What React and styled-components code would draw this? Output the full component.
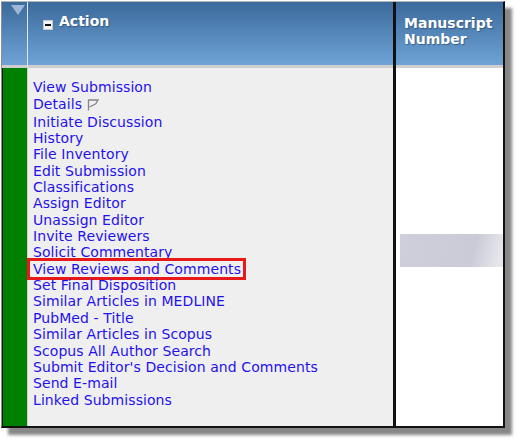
import React from 'react';
import styled, { createGlobalStyle } from 'styled-components';

const Global = createGlobalStyle`
  html, body { margin: 0; padding: 0; background: #fff; }
  body { width: 521px; height: 444px; overflow: hidden; font-family: "DejaVu Sans", Verdana, sans-serif; }
`;

const Frame = styled.div`
  box-sizing: border-box;
  width: 504px;
  height: 427px;
  margin: 1px 0 0 1px;
  border: 1px solid #8f8f8f;
  border-top-color: #b5b5b5;
  border-right: 2px solid #111;
  border-bottom: 2px solid #111;
  background: #fff;
  box-shadow: 7px 7px 3px rgba(70, 70, 70, 0.65);
  display: grid;
  grid-template-columns: 26px 365px 3px 1fr;
  grid-template-rows: 66px 1fr;
`;

const HeadCell = styled.div`
  box-sizing: border-box;
  background: linear-gradient(#3b6a9c, #6fa3d6);
  border-bottom: 3px solid #cfcfcf;
  border-right: ${p => (p.$divider ? '1px solid #dfe8f0' : 'none')};
  color: #fff;
  font-weight: bold;
  font-size: 14px;
  line-height: 16px;
  text-shadow: 1px 1px 1px rgba(20, 50, 90, 0.5);
  padding: ${p => p.$pad || '0'};
  display: flex;
  align-items: flex-start;
  gap: 6px;
`;

const SortArrow = styled.span`
  width: 0;
  height: 0;
  margin: 3px 0 0 9px;
  border-left: 7px solid transparent;
  border-right: 7px solid transparent;
  border-top: 10px solid #9db8d6;
`;

const Toggle = styled.span`
  box-sizing: border-box;
  width: 10px;
  height: 10px;
  margin-top: 7px;
  background: #f4f4f4;
  border: 1px solid #c8c8c8;
  display: flex;
  align-items: center;
  justify-content: center;
  &::after { content: ''; width: 6px; height: 2px; background: #111; }
`;

const Separator = styled.div`
  grid-row: 1 / span 2;
  grid-column: 3;
  background: #111;
`;

const StatusCell = styled.div`
  background: #008000;
  border-left: 1px solid #111;
  border-right: 1px solid #ccc;
`;

const ActionCell = styled.div`
  background: #efefef;
  padding: 11px 0 0 5px;
`;

const ActionList = styled.ul`
  list-style: none;
  margin: 0;
  padding: 0;
  font-size: 14px;
  letter-spacing: 0.08px;
  line-height: 16.35px;
  color: #1f12ee;
`;

const ActionItem = styled.li`
  width: max-content;
  height: ${p => (p.$tall ? '18.35px' : '16.35px')};
  display: flex;
  align-items: center;
  gap: 5px;
  position: relative;
`;

const Highlight = styled.span`
  position: absolute;
  inset: -3px -5px -3px -6px;
  border: 3px solid #e81919;
`;

const DataCell = styled.div`
  padding-top: 166px;
  padding-left: 4px;
`;

const Blurred = styled.div`
  height: 33px;
  background: linear-gradient(105deg, #cfcfdb 0%, #cbcbd8 70%, #e6e6ec 95%);
`;

const Flag = () => (
  <svg width="12" height="12" viewBox="0 0 12 12" fill="none" stroke="#85858d" strokeWidth="1.3">
    <path d="M1.5 11.5 V1 H11 L8.8 4.8 L2.5 8" />
  </svg>
);

const actions = [
  'View Submission', 'Details', 'Initiate Discussion', 'History', 'File Inventory',
  'Edit Submission', 'Classifications', 'Assign Editor', 'Unassign Editor', 'Invite Reviewers',
  'Solicit Commentary', 'View Reviews and Comments', 'Set Final Disposition',
  'Similar Articles in MEDLINE', 'PubMed - Title', 'Similar Articles in Scopus',
  'Scopus All Author Search', "Submit Editor's Decision and Comments", 'Send E-mail',
  'Linked Submissions',
];

export default function App() {
  return (
    <>
      <Global />
      <Frame>
        <HeadCell $divider><SortArrow /></HeadCell>
        <HeadCell $pad="11px 0 0 15px"><Toggle />Action</HeadCell>
        <Separator />
        <HeadCell $pad="13px 0 0 8px">Manuscript<br />Number</HeadCell>
        <StatusCell />
        <ActionCell>
          <ActionList>
            {actions.map(a => (
              <ActionItem key={a} $tall={a === 'Details'}>
                {a}
                {a === 'Details' && <Flag />}
                {a === 'View Reviews and Comments' && <Highlight />}
              </ActionItem>
            ))}
          </ActionList>
        </ActionCell>
        <DataCell><Blurred /></DataCell>
      </Frame>
    </>
  );
}
